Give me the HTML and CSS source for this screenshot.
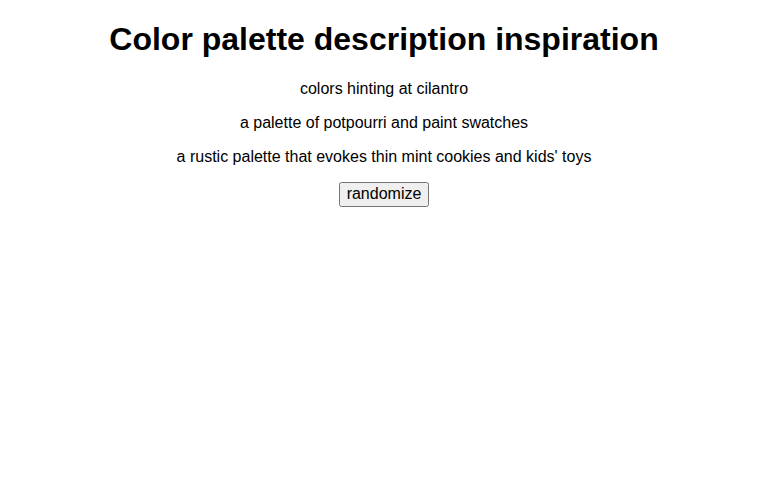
FILE: index.html
```html
<!DOCTYPE html>
<html lang="en">
<head>
    <meta charset="UTF-8">
    <meta name="viewport" content="width=device-width, initial-scale=1.0">
    <title>Color palette description inspiration</title>
    <link rel="stylesheet" href="styles.css">
</head>
<body>
    <h1>Color palette description inspiration</h1>

    <div id="descriptions">
        <p>colors hinting at cilantro</p>
        <p>a palette of potpourri and paint swatches</p>
        <p>a rustic palette that evokes thin mint cookies and kids' toys</p>
    </div>

    <button id="randomize-btn">randomize</button>
</body>
</html>
```

FILE: styles.css
```css
body {
    margin: 0;
    font-family: "Liberation Sans", Arial, sans-serif;
    text-align: center;
    color: #000;
    background-color: #fff;
}
h1 {
    font-size: 32px;
    margin: 21px 0 22px;
}
p {
    font-size: 16px;
    margin: 16px 0;
}
button {
    font-family: "Liberation Sans", Arial, sans-serif;
    font-size: 16px;
    padding: 1px 6px 2px;
}
```
